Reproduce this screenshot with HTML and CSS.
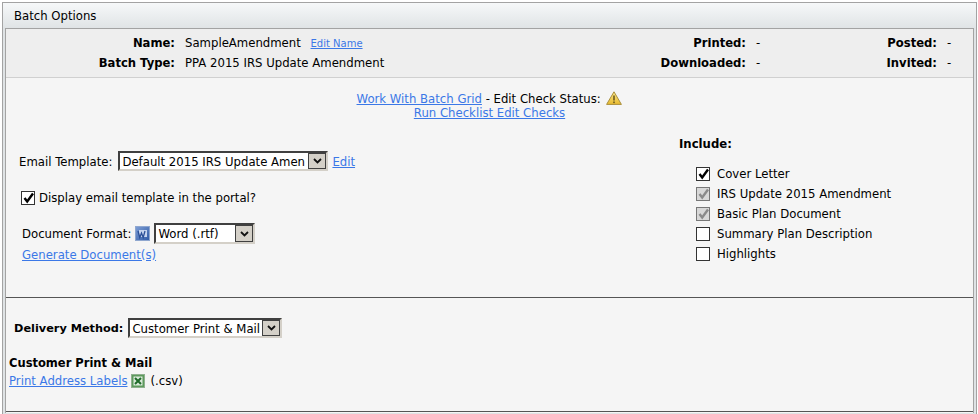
FILE: index.html
```html
<!DOCTYPE html>
<html lang="en">
<head>
<meta charset="utf-8">
<title>Batch Options</title>
<link rel="stylesheet" href="styles.css">
</head>
<body>
<div class="panel">
  <div class="panel-title">Batch Options</div>
  <div class="panel-body">
    <div class="info">
      <b class="lbl">Name:</b><span class="val">SampleAmendment <a href="#" class="small-link">Edit Name</a></span>
      <b class="lbl">Printed:</b><span class="val">-</span>
      <b class="lbl">Posted:</b><span class="val">-</span>
      <b class="lbl">Batch Type:</b><span class="val">PPA 2015 IRS Update Amendment</span>
      <b class="lbl">Downloaded:</b><span class="val">-</span>
      <b class="lbl">Invited:</b><span class="val">-</span>
    </div>
    <div class="main">
      <div class="center-links">
        <div><a href="#">Work With Batch Grid</a> - Edit Check Status:
          <svg class="warn" width="16" height="14" viewBox="0 0 16 14"><defs><linearGradient id="warnFill" x1="0" y1="0" x2="0" y2="1"><stop offset="0" stop-color="#fbe88a"/><stop offset="1" stop-color="#e8b92e"/></linearGradient></defs><path d="M8 .8 15.400 13.400H.6Z" fill="url(#warnFill)" stroke="#a98f3c"/><rect x="7.200" y="4.500" width="1.600" height="5" fill="#6b5a20"/><rect x="7.200" y="10.500" width="1.600" height="1.600" fill="#6b5a20"/></svg>
        </div>
        <div><a href="#">Run Checklist Edit Checks</a></div>
      </div>
      <div class="columns">
        <div class="left">
          <div class="row-email">
            <span class="nudge">Email Template:</span>
            <span class="select sel-email"><span class="sel-text">Default 2015 IRS Update Amen</span><span class="sel-btn"><svg width="9" height="6" viewBox="0 0 9 6"><path d="M1 1 4.500 4.500 8 1" fill="none" stroke="#111" stroke-width="1.800"/></svg></span></span>
            <a href="#" class="nudge">Edit</a>
          </div>
          <div class="row-portal">
            <span class="check on"><svg width="13" height="13" viewBox="0 0 13 13"><path d="M2.500 6 5.200 9.500 11 1.500" fill="none" stroke="#000" stroke-width="2.400"/></svg></span>
            <span>Display email template in the portal?</span>
          </div>
          <div class="row-format">
            <span>Document Format:</span>
            <svg class="file-icon" width="15" height="15" viewBox="0 0 15 15"><defs><linearGradient id="wordFill" x1="0" y1="0" x2="1" y2="1"><stop offset="0" stop-color="#7f9fd6"/><stop offset="1" stop-color="#2f5aa5"/></linearGradient></defs><rect x=".5" y=".5" width="14" height="14" fill="url(#wordFill)" stroke="#8fa7cf"/><path d="M4 4H12V11H4Z" fill="#c5d4ee"/><path d="M3 5 4.800 11.500 6.500 7 8.200 11.500 10 5" fill="none" stroke="#2a4f97" stroke-width="1.300"/></svg>
            <span class="select sel-format"><span class="sel-text">Word (.rtf)</span><span class="sel-btn"><svg width="9" height="6" viewBox="0 0 9 6"><path d="M1 1 4.500 4.500 8 1" fill="none" stroke="#111" stroke-width="1.800"/></svg></span></span>
          </div>
          <div class="row-generate"><a href="#">Generate Document(s)</a></div>
        </div>
        <div class="right">
          <b class="include-title">Include:</b>
          <ul class="include-list">
            <li><span class="check on"><svg width="13" height="13" viewBox="0 0 13 13"><path d="M2.500 6 5.200 9.500 11 1.500" fill="none" stroke="#000" stroke-width="2.400"/></svg></span>Cover Letter</li>
            <li><span class="check off-on"><svg width="13" height="13" viewBox="0 0 13 13"><path d="M2.500 6 5.200 9.500 11 1.500" fill="none" stroke="#8a8a8a" stroke-width="2.400"/></svg></span>IRS Update 2015 Amendment</li>
            <li><span class="check off-on"><svg width="13" height="13" viewBox="0 0 13 13"><path d="M2.500 6 5.200 9.500 11 1.500" fill="none" stroke="#8a8a8a" stroke-width="2.400"/></svg></span>Basic Plan Document</li>
            <li><span class="check"></span>Summary Plan Description</li>
            <li><span class="check"></span>Highlights</li>
          </ul>
        </div>
      </div>
    </div>
    <div class="delivery">
      <div class="row-delivery">
        <b class="delivery-label">Delivery Method:</b>
        <span class="select sel-delivery"><span class="sel-text">Customer Print &amp; Mail</span><span class="sel-btn"><svg width="9" height="6" viewBox="0 0 9 6"><path d="M1 1 4.500 4.500 8 1" fill="none" stroke="#111" stroke-width="1.800"/></svg></span></span>
      </div>
      <div class="delivery-title"><b>Customer Print &amp; Mail</b></div>
      <div class="row-labels">
        <a href="#">Print Address Labels</a>
        <svg class="file-icon" width="14" height="14" viewBox="0 0 14 14"><rect x=".5" y=".5" width="13" height="13" fill="#5d9a5d" stroke="#8fb08f"/><rect x="2.500" y="2.500" width="9" height="9" fill="#dbeadb"/><path d="M4 4 10 10M10 4 4 10" stroke="#1f6b2a" stroke-width="2"/></svg>
        <span>(.csv)</span>
      </div>
    </div>
  </div>
</div>
</body>
</html>
```

FILE: styles.css
```css
* { box-sizing: border-box; }
html, body { margin: 0; padding: 0; }
body {
  width: 978px;
  height: 414px;
  overflow: hidden;
  background: #fff;
  padding: 2px 0 0 2px;
  font-family: "DejaVu Sans", Verdana, sans-serif;
  font-size: 11.7px;
  color: #000;
}
a { color: #3b78e7; text-decoration: underline; }
.panel {
  width: 975px;
  height: 412px;
  border: 1px solid #a3a3a3;
  border-bottom: 0;
  padding: 0 2px 0 2px;
  background: linear-gradient(#f6f8f9, #dfe3e5 26px);
}
.panel-title {
  height: 25px;
  padding: 1px 0 0 9px;
  line-height: 25px;
}
.panel-body {
  border: 1px solid #a3a3a3;
  border-bottom: 0;
  height: 385px;
  background: #f5f5f5;
}
.info {
  height: 49px;
  padding-top: 4px;
  background: #eeeeee;
  border-bottom: 1px solid #d0d0d0;
  display: grid;
  grid-template-columns: 169px 425px 146px 102px 89px 1fr;
  grid-auto-rows: 20px;
  align-items: center;
}
.lbl { text-align: right; font-size: 11.6px; }
.val { padding-left: 10px; white-space: nowrap; }
.small-link { font-size: 10px; margin-left: 6px; }
.main {
  height: 220px;
  border-bottom: 1px solid #555;
}
.center-links {
  padding-top: 13px;
  text-align: center;
  line-height: 14px;
}
.warn { vertical-align: -2px; margin-left: 2px; }
.columns {
  display: flex;
  justify-content: space-between;
}
.left { padding: 31px 0 0 13px; }
.row-email { display: flex; align-items: center; gap: 6px; height: 20px; }
.row-email a { margin-left: -2px; }
.nudge { padding-top: 1px; }
.select {
  display: inline-flex;
  align-items: stretch;
  border-style: solid;
  border-width: 2px;
  border-color: #404040 #d4d0c8 #d4d0c8 #404040;
  background: #fff;
}
.sel-text { padding-left: 2px; flex: 1; white-space: nowrap; overflow: hidden; line-height: 18px; }
.sel-btn {
  flex: none;
  width: 18px;
  background: #d4d0c8;
  border: 1px solid #404040;
  display: flex;
  align-items: center;
  justify-content: center;
}
.sel-email { width: 210px; height: 20px; }
.sel-format { width: 101px; height: 21px; }
.sel-delivery { width: 154px; height: 20px; }
.check {
  flex: none;
  display: inline-block;
  width: 14px;
  height: 14px;
  border: 1px solid #333;
  background: #fff;
}
.check svg { display: block; }
.check.off-on { background: #d8d8d8; border-color: #777; }
.row-portal { display: flex; align-items: center; gap: 4px; margin: 20px 0 0 2px; height: 14px; }
.row-format { display: flex; align-items: center; gap: 4px; margin: 18px 0 0 3px; height: 21px; }
.row-generate { margin: 4px 0 0 3px; line-height: 14px; }
.right { width: 294px; padding-top: 16px; }
.include-title { display: block; line-height: 16px; }
.include-list { list-style: none; margin: 12px 0 0; padding: 0 0 0 17px; }
.include-list li { display: flex; align-items: center; gap: 7px; height: 20px; }
.delivery { height: 114px; border-bottom: 1px solid #555; }
.row-delivery { display: flex; align-items: center; gap: 5px; padding: 20px 0 0 8px; }
.delivery-label { font-size: 11.3px; }
.delivery-title { margin: 18px 0 0 3px; line-height: 14px; font-size: 11.5px; }
.row-labels { display: flex; align-items: center; gap: 4px; margin: 3px 0 0 3px; height: 15px; }
.row-labels span { margin-left: 1px; }
.file-icon { flex: none; display: block; }
```
